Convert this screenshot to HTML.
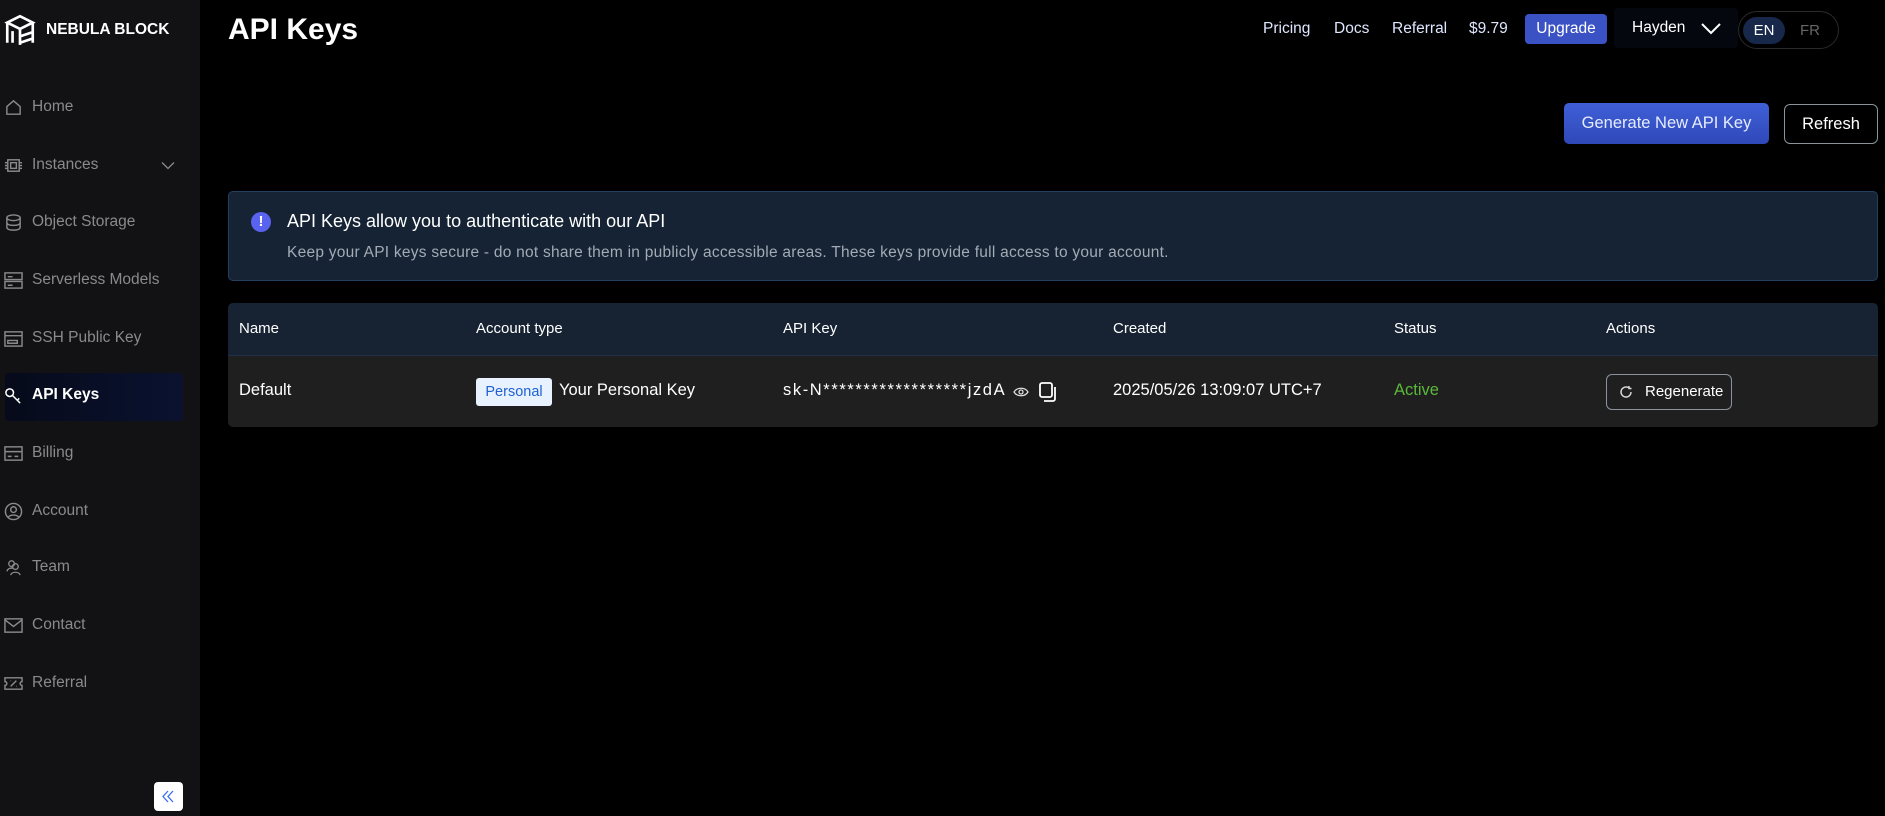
<!DOCTYPE html>
<html><head><meta charset="utf-8"><style>
*{box-sizing:border-box;margin:0;padding:0}
body{width:1885px;height:816px;background:#000;font-family:"Liberation Sans",sans-serif;color:#fff;position:relative;overflow:hidden}
.sb{position:absolute;left:0;top:0;width:200px;height:816px;background:#121214}
.logo{position:absolute;left:4px;top:13px;display:flex;align-items:center;gap:10px;font-weight:bold;font-size:15.5px}
.item{position:absolute;left:0;width:200px;height:30px;display:flex;align-items:center;color:#8a8a8e;font-size:15.5px}
.item svg{position:absolute;left:4px;width:19px;height:19px}
.item span{position:absolute;left:32px}
.active{position:absolute;left:5px;top:373px;width:178px;height:48px;background:linear-gradient(90deg,#060a1a,#0a1230);border-radius:3px}
.abs{position:absolute}
.nav{position:absolute;top:20px;font-size:15.5px;color:#dfe6ff}
.th{position:absolute;top:320px;font-size:15px;color:#fff}
.td{position:absolute;top:381px;font-size:16.5px;color:#fff}
</style></head><body>
<div class="sb">
 <div class="logo"><svg width="32" height="34" viewBox="0 0 30 32" fill="none" stroke="#fff" stroke-width="2.5"><path d="M3 9L15 3L27 9L15 15Z"/><path d="M3 9V28M15 15V30M27 9V28M8 17V28M15 22L27 18M15 28L27 24"/></svg><span>NEBULA BLOCK</span></div>
 <div class="active"></div>
 <div class="item" style="top:92px"><svg viewBox="0 0 20 20" fill="none" stroke="#8a8a8e" stroke-width="1.5"><path d="M3 9L10 3L17 9V17H3Z"/></svg><span>Home</span></div>
 <div class="item" style="top:150px"><svg viewBox="0 0 20 20" fill="none" stroke="#8a8a8e" stroke-width="1.5"><rect x="4" y="4" width="12" height="12"/><rect x="7" y="7" width="6" height="6"/><path d="M1 7h3M1 10h3M1 13h3M16 7h3M16 10h3M16 13h3"/></svg><span>Instances</span><svg style="left:160px;width:16px" viewBox="0 0 16 16" fill="none" stroke="#8a8a8e" stroke-width="1.3"><path d="M2 5l6 6 6-6"/></svg></div>
 <div class="item" style="top:207px"><svg viewBox="0 0 20 20" fill="none" stroke="#8a8a8e" stroke-width="1.5"><ellipse cx="10" cy="5" rx="7" ry="3"/><path d="M3 5v10c0 2 3 3 7 3s7-1 7-3V5M3 10c0 2 3 3 7 3s7-1 7-3"/></svg><span>Object Storage</span></div>
 <div class="item" style="top:265px"><svg viewBox="0 0 20 20" fill="none" stroke="#8a8a8e" stroke-width="1.5"><rect x="1" y="2" width="18" height="7"/><rect x="1" y="11" width="18" height="7"/><path d="M4 6h5M4 15h5"/></svg><span>Serverless Models</span></div>
 <div class="item" style="top:323px"><svg viewBox="0 0 20 20" fill="none" stroke="#8a8a8e" stroke-width="1.5"><rect x="1" y="3" width="18" height="15"/><path d="M1 7h18M4 12h10v3H4z"/></svg><span>SSH Public Key</span></div>
 <div class="item" style="top:380px;color:#fff;font-weight:bold"><svg viewBox="0 0 20 20" fill="none" stroke="#fff" stroke-width="1.6"><circle cx="6" cy="7" r="4"/><path d="M9 10l8 8M14 15l2-2"/></svg><span>API Keys</span></div>
 <div class="item" style="top:438px"><svg viewBox="0 0 20 20" fill="none" stroke="#8a8a8e" stroke-width="1.5"><rect x="1" y="3" width="18" height="14"/><path d="M1 8h18M4 13h4M11 13h4"/></svg><span>Billing</span></div>
 <div class="item" style="top:496px"><svg viewBox="0 0 20 20" fill="none" stroke="#8a8a8e" stroke-width="1.5"><circle cx="10" cy="10" r="8.5"/><circle cx="10" cy="8" r="3"/><path d="M4.5 16c2-3 9-3 11 0"/></svg><span>Account</span></div>
 <div class="item" style="top:552px"><svg viewBox="0 0 20 20" fill="none" stroke="#8a8a8e" stroke-width="1.4"><circle cx="8" cy="6" r="3"/><circle cx="12" cy="9" r="3"/><path d="M3 14c1-3 4-4 6-3M7 18c1-4 9-4 10 0"/></svg><span>Team</span></div>
 <div class="item" style="top:610px"><svg viewBox="0 0 20 20" fill="none" stroke="#8a8a8e" stroke-width="1.5"><rect x="1" y="3" width="18" height="14"/><path d="M1 4l9 7 9-7"/></svg><span>Contact</span></div>
 <div class="item" style="top:668px"><svg viewBox="0 0 20 20" fill="none" stroke="#8a8a8e" stroke-width="1.5"><path d="M1 4h18v4a2 2 0 000 4v4H1v-4a2 2 0 000-4z"/><path d="M7 13l6-6M7 7h.5M13 13h.5"/></svg><span>Referral</span></div>
 <div class="abs" style="left:154px;top:782px;width:29px;height:29px;background:#fff;border-radius:4px"><svg width="29" height="29" viewBox="0 0 29 29" fill="none" stroke="#3b6cf0" stroke-width="1.3"><path d="M14 9l-5 5.5 5 5.5M19 9l-5 5.5 5 5.5"/></svg></div>
</div>

<div class="abs" style="left:228px;top:13px;font-size:30px;font-weight:bold">API Keys</div>
<div class="nav" style="left:1263px">Pricing</div>
<div class="nav" style="left:1334px">Docs</div>
<div class="nav" style="left:1392px">Referral</div>
<div class="nav" style="left:1469px">$9.79</div>
<div class="abs" style="left:1525px;top:14px;width:82px;height:30px;background:#3a52c4;border-radius:4px;font-size:15.5px;text-align:center;line-height:30px">Upgrade</div>
<div class="abs" style="left:1614px;top:8px;width:124px;height:40px;background:#05070f;border-radius:4px;font-size:15.5px;padding:11px 0 0 18px">Hayden<svg class="abs" style="left:86px;top:14px" width="22" height="14" viewBox="0 0 22 14" fill="none" stroke="#fff" stroke-width="2"><path d="M2 2l9 9 9-9"/></svg></div>
<div class="abs" style="left:1738px;top:11px;width:101px;height:38px;border:1px solid #2a2a2e;border-radius:19px"><div class="abs" style="left:4px;top:5px;width:42px;height:27px;background:#17284a;border-radius:14px;font-size:15px;text-align:center;line-height:27px">EN</div><div class="abs" style="left:61px;top:10px;font-size:15px;color:#666">FR</div></div>

<div class="abs" style="left:1564px;top:103px;width:205px;height:41px;background:linear-gradient(#4060d8,#2f48b8);border-radius:5px;font-size:16.5px;text-align:center;line-height:41px;color:#e6ecff">Generate New API Key</div>
<div class="abs" style="left:1784px;top:104px;width:94px;height:40px;border:1px solid #8a939c;border-radius:6px;font-size:16.5px;text-align:center;line-height:38px">Refresh</div>

<div class="abs" style="left:228px;top:191px;width:1650px;height:90px;background:#152334;border:1px solid #22405e;border-radius:5px">
 <div class="abs" style="left:22px;top:20px;width:20px;height:20px;border-radius:50%;background:#5a63f0;text-align:center;font-weight:bold;font-size:15px;line-height:20px">!</div>
 <div class="abs" style="left:58px;top:19px;font-size:18px">API Keys allow you to authenticate with our API</div>
 <div class="abs" style="left:58px;top:52px;font-size:15.5px;color:#a3abb5;letter-spacing:0.25px">Keep your API keys secure - do not share them in publicly accessible areas. These keys provide full access to your account.</div>
</div>

<div class="abs" style="left:228px;top:303px;width:1650px;height:124px;background:#1f1f1f;border-radius:5px;overflow:hidden"><div style="height:53px;background:#172233;border-bottom:1px solid #22304a"></div></div>
<div class="th" style="left:239px">Name</div>
<div class="th" style="left:476px">Account type</div>
<div class="th" style="left:783px">API Key</div>
<div class="th" style="left:1113px">Created</div>
<div class="th" style="left:1394px">Status</div>
<div class="th" style="left:1606px">Actions</div>
<div class="td" style="left:239px">Default</div>
<div class="abs" style="left:476px;top:378px;height:28px;background:#e8f2ff;border-radius:3px;color:#2060d0;font-size:14.5px;line-height:28px;text-align:center;width:76px">Personal</div>
<div class="td" style="left:559px">Your Personal Key</div>
<div class="td" style="left:783px;letter-spacing:1.6px">sk-N******************jzdA</div>
<svg class="abs" style="left:1013px;top:384px" width="16" height="16" viewBox="0 0 16 16" fill="none" stroke="#ddd" stroke-width="1.3"><path d="M1 8c3-5 11-5 14 0-3 5-11 5-14 0z"/><circle cx="8" cy="8" r="2"/></svg>
<svg class="abs" style="left:1038px;top:381px" width="20" height="22" viewBox="0 0 20 22" fill="none" stroke="#fff" stroke-width="1.8"><rect x="2" y="2" width="12" height="14" rx="2"/><path d="M17 6v12a2 2 0 01-2 2H6"/></svg>
<div class="td" style="left:1113px">2025/05/26 13:09:07 UTC+7</div>
<div class="td" style="left:1394px;color:#5cb83a">Active</div>
<div class="abs" style="left:1606px;top:374px;width:126px;height:36px;border:1px solid #8a939c;border-radius:6px;font-size:15px;line-height:34px;padding-left:38px">Regenerate<svg class="abs" style="left:12px;top:10px" width="14" height="14" viewBox="0 0 14 14" fill="none" stroke="#ddd" stroke-width="1.4"><path d="M12 7a5 5 0 11-2-4M10 1v2.5h2.5"/></svg></div>
</body></html>
